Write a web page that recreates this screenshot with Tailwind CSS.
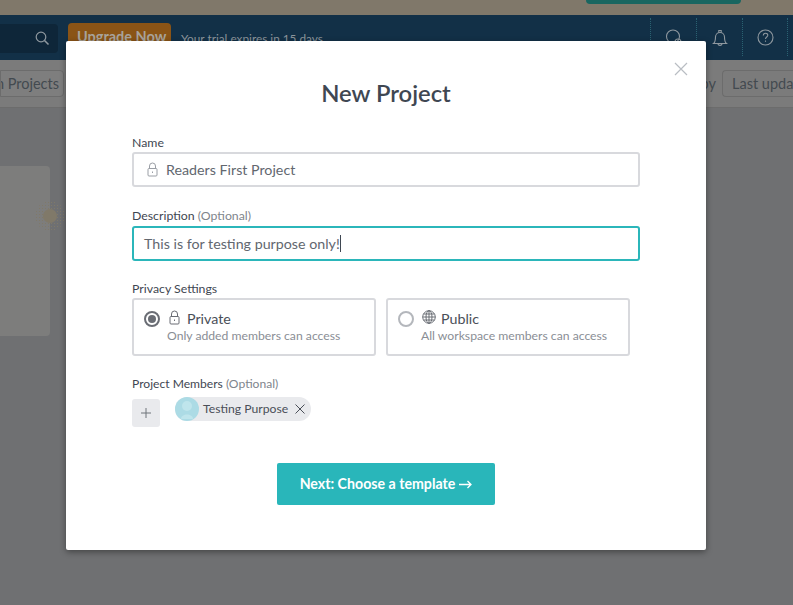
<!DOCTYPE html>
<html><head><meta charset="utf-8"><script src="https://cdn.jsdelivr.net/npm/@tailwindcss/browser@4"></script></head>
<body class="m-0 overflow-hidden">
<div class="relative w-[793px] h-[605px] overflow-hidden bg-[#6f7072] font-['Lato',sans-serif]">
  <!-- page behind -->
  <div class="flex flex-col">
    <div class="h-[15px] bg-[#80786a] flex pl-[586px]"><div class="w-[155px] h-[4px] bg-[#196660] rounded-b-sm"></div></div>
    <div class="h-[45px] bg-[#123047] flex items-center">
      <div class="w-[58px] h-[29px] bg-[#0e2639] rounded-r-sm flex items-center justify-end pr-[8px] mb-[-1px]">
        <svg width="15" height="15" viewBox="0 0 15 15" fill="none" stroke="#8f989f" stroke-width="1.2"><circle cx="6" cy="6" r="4.8"/><path d="M9.5 9.5 13.5 13.5" stroke-width="1.6"/></svg>
      </div>
      <div class="ml-[10px] w-[103px] h-[30px] bg-[#8a5416] rounded-sm text-[#a8a39b] text-[14.500px] font-bold pl-[9px] pt-[4px] leading-[20px]">Upgrade Now</div>
      <div class="ml-[10px] text-[#8b949b] text-[11.800px] mt-[2px]">Your trial expires in 15 days</div>
      <div class="ml-auto flex h-[45px] pt-[3px] mr-[5px]">
        <div class="w-[46px] h-[38px] border-l border-dotted border-[#2a6272] flex items-start justify-center pt-[11px]"><svg width="18" height="18" viewBox="0 0 18 18" fill="none" stroke="#8f989f" stroke-width="1.1"><circle cx="8" cy="7.5" r="6.500"/><circle cx="13" cy="13" r="3"/></svg></div>
        <div class="w-[46px] h-[38px] border-l border-dotted border-[#2a6272] flex items-start justify-center pt-[11px]"><svg width="16" height="18" viewBox="0 0 16 18" fill="none" stroke="#8f989f" stroke-width="1.1"><path d="M1.500 14.500c2-1.500 2-4 2-6.500 0-2.500 2-4.500 4.500-4.500s4.500 2 4.500 4.500c0 2.500 0 5 2 6.500z"/><path d="M6.800 3.500V1.500h2.400v2M6 14.500c0 2.500 4 2.500 4 0"/></svg></div>
        <div class="w-[46px] h-[38px] border-l border-r border-dotted border-[#2a6272] flex items-start justify-center pt-[11px]"><svg width="17" height="17" viewBox="0 0 17 17" fill="none" stroke="#8f989f" stroke-width="1.1"><circle cx="8.500" cy="8.500" r="7.500"/><path d="M6.300 6.500c0-3 4.500-3 4.500-.2 0 1.800-2.300 1.700-2.300 3.700"/><path d="M8.500 11.500v1.300"/></svg></div>
      </div>
    </div>
    <div class="h-[48px] bg-[#7b7b7b] border-b border-[#6c6c6c] flex items-center relative">
      <div class="h-[27px] w-[64px] bg-[#7e7e7e] border border-[#6c6c6c] rounded-r-sm flex items-center justify-end pr-[4px] text-[#434a50] text-[14.500px] whitespace-nowrap overflow-hidden">Search Projects</div>
      <div class="ml-auto flex items-center">
        <span class="text-[#434a50] text-[14.500px] mr-[6px]">by</span>
        <div class="h-[27px] w-[71px] pl-[9px] border-y border-l border-[#6c6c6c] rounded-l-sm text-[#434a50] text-[14.500px] leading-[25px] whitespace-nowrap overflow-hidden">Last update</div>
      </div>
    </div>
    <div class="flex mt-[58px] relative">
      <div class="w-[50px] h-[170px] bg-[#7d7d7c] rounded-r-sm"></div>
      <div class="w-[30px] h-[30px] mt-[35px] ml-[-15px] rounded-full bg-[radial-gradient(#807969_1px,transparent_1px)] bg-[length:3px_3px] flex items-center justify-center"><div class="w-[14px] h-[14px] bg-[#807969] rounded-full"></div></div>
    </div>
  </div>

  <!-- modal -->
  <div class="absolute left-[66px] top-[41px] w-[640px] h-[509px] bg-white rounded-[2px] shadow-[0_2px_6px_rgba(0,0,0,0.4)] px-[66px] text-[#3f4752]">
    <button class="absolute right-[18px] top-[21px]">
      <svg class="block" width="14" height="14" viewBox="0 0 14 14" stroke="#b9bdc3" stroke-width="1.2" fill="none"><path d="M1 1 13 13M13 1 1 13"/></svg>
    </button>
    <h1 class="text-center text-[23.800px] font-semibold leading-[30px] pt-[37px] text-[#3f4752]">New Project</h1>

    <div class="mt-[28px] text-[12.300px] leading-[14px] text-[#3f4752]">Name</div>
    <div class="mt-[2px] h-[35px] w-[508px] border-2 border-[#d8d9dd] rounded-[3px] flex items-center pl-[13px] text-[14.250px] text-[#62676f]">
      <svg class="mr-[8px]" width="11" height="15" viewBox="0 0 11 15" fill="none" stroke="#9a9ea5" stroke-width="1"><rect x="1" y="6.500" width="9" height="7.500" rx="1"/><path d="M2.500 6.500V4a3 3 0 0 1 6 0v2.500"/><path d="M5.500 9.500v1.500"/></svg>
      Readers First Project
    </div>

    <div class="mt-[22px] text-[12.300px] leading-[14px] text-[#3f4752]">Description <span class="text-[#80858c]">(Optional)</span></div>
    <div class="mt-[3px] h-[35px] w-[508px] border-2 border-[#2bb6ba] rounded-[3px] flex items-center pl-[10px] text-[14.250px] text-[#62676f]">This is for testing purpose only!<span class="w-px h-[17px] bg-[#3f4752]"></span></div>

    <div class="mt-[21px] text-[12.300px] leading-[14px] text-[#3f4752]">Privacy Settings</div>
    <div class="mt-[2px] flex gap-[10px]">
      <div class="w-[244px] h-[58px] border-2 border-[#d8d9dd] rounded-[3px] flex pl-[10px] pt-[10px]">
        <div class="w-[16px] h-[16px] mt-[1px] rounded-full border-2 border-[#6a6d74] flex items-center justify-center shrink-0"><div class="w-[8px] h-[8px] rounded-full bg-[#6a6d74]"></div></div>
        <div class="ml-[7px]">
          <div class="flex items-center text-[14.250px] leading-[17px] text-[#4a4f58]"><svg class="ml-[2px] mr-[7px] mt-[-2px]" width="11" height="15" viewBox="0 0 11 15" fill="none" stroke="#6a6d74" stroke-width="1"><rect x="1" y="6.500" width="9" height="7.500" rx="1"/><path d="M2.500 6.500V4a3 3 0 0 1 6 0v2.500"/><path d="M5.500 9.500v1.500"/></svg>Private</div>
          <div class="mt-[2px] text-[12.200px] leading-[14px] text-[#8a8e95]">Only added members can access</div>
        </div>
      </div>
      <div class="w-[244px] h-[58px] border-2 border-[#d8d9dd] rounded-[3px] flex pl-[10px] pt-[10px]">
        <div class="w-[16px] h-[16px] mt-[1px] rounded-full border-2 border-[#b4b7bc] shrink-0"></div>
        <div class="ml-[7px]">
          <div class="flex items-center text-[14.250px] leading-[17px] text-[#4a4f58]"><svg class="ml-[1px] mr-[5px] mt-[-3px]" width="14" height="14" viewBox="0 0 14 14" fill="none" stroke="#5e626a" stroke-width="0.9"><circle cx="7" cy="7" r="6.300"/><ellipse cx="7" cy="7" rx="3" ry="6.300"/><path d="M7 .7v12.600M.7 7h12.600M1.500 4h11M1.500 10h11"/></svg>Public</div>
          <div class="mt-[2px] text-[12.200px] leading-[14px] text-[#8a8e95]">All workspace members can access</div>
        </div>
      </div>
    </div>

    <div class="mt-[21px] text-[12.100px] leading-[14px] text-[#3f4752]">Project Members <span class="text-[#80858c]">(Optional)</span></div>
    <div class="mt-[6px] flex items-start">
      <div class="w-[28px] h-[28px] mt-[2px] bg-[#e9eaed] rounded-[3px] flex items-center justify-center"><svg width="10" height="10" viewBox="0 0 10 10" stroke="#6f747b" stroke-width="1" fill="none"><path d="M5 0v10M0 5h10"/></svg></div>
      <div class="ml-[15px] h-[24px] w-[136px] bg-[#e9eaed] rounded-full flex items-center">
        <div class="w-[24px] h-[24px] rounded-full bg-[#acdbe5] flex items-center justify-center shrink-0"><svg width="14" height="20" viewBox="0 0 14 20"><circle cx="7" cy="7" r="5" fill="#bfe5ec"/><path d="M1 20c0-6 12-6 12 0z" fill="#bfe5ec"/></svg></div>
        <span class="ml-[4px] text-[12.200px] text-[#4a4f58] whitespace-nowrap">Testing Purpose</span>
        <svg class="ml-[7px]" width="10" height="10" viewBox="0 0 10 10" stroke="#4a4f58" stroke-width="1" fill="none"><path d="M.5.5l9 9M9.500.5l-9 9"/></svg>
      </div>
    </div>

    <div class="mt-[36px] flex justify-center">
      <button class="w-[218px] h-[42px] bg-[#29b6ba] rounded-[2px] text-white text-[14.200px] font-bold flex items-center justify-center gap-[4px]">Next: Choose a template <svg width="13" height="9" viewBox="0 0 13 9" fill="none" stroke="white" stroke-width="1.300"><path d="M0 4.500h12M8.500 1l3.500 3.500L8.500 8"/></svg></button>
    </div>
  </div>
</div>
</body></html>
